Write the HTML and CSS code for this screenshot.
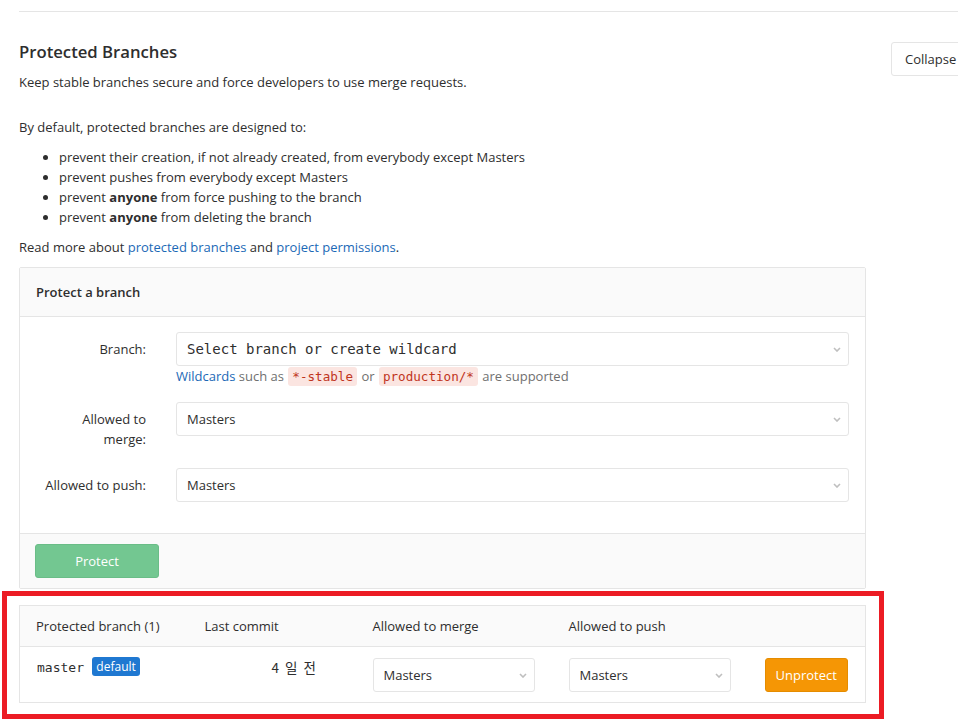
FILE: index.html
```html
<!DOCTYPE html>
<html lang="en">
<head>
    <meta charset="UTF-8">
    <meta name="viewport" content="width=device-width, initial-scale=1.0">
    <title>Protected Branches</title>
    <link rel="stylesheet" href="styles.css">
</head>
<body>
    <section class="settings">
        <div class="settings-header">
            <div class="settings-intro">
                <h4>Protected Branches</h4>
                <p>Keep stable branches secure and force developers to use merge requests.</p>
            </div>
            <button type="button" class="btn btn-collapse">Collapse</button>
        </div>

        <div class="settings-content">
            <p class="lead-in">By default, protected branches are designed to:</p>
            <ul class="rules">
                <li>prevent their creation, if not already created, from everybody except Masters</li>
                <li>prevent pushes from everybody except Masters</li>
                <li>prevent <strong>anyone</strong> from force pushing to the branch</li>
                <li>prevent <strong>anyone</strong> from deleting the branch</li>
            </ul>
            <p class="read-more">Read more about <a href="#">protected branches</a> and <a href="#">project permissions</a>.</p>

            <form class="panel">
                <div class="panel-heading">Protect a branch</div>
                <div class="panel-body">
                    <div class="form-group">
                        <label class="control-label">Branch:</label>
                        <div class="field">
                            <button type="button" class="dropdown-toggle mono">
                                <span>Select branch or create wildcard</span>
                                <svg class="chevron" width="8" height="5" viewBox="0 0 8 5"><path d="M1 1l3 3 3-3" fill="none" stroke="#bfbfbf" stroke-width="1.6"/></svg>
                            </button>
                            <p class="help-block"><a href="#">Wildcards</a> such as <code>*-stable</code> or <code>production/*</code> are supported</p>
                        </div>
                    </div>
                    <div class="form-group">
                        <label class="control-label">Allowed to<br>merge:</label>
                        <div class="field">
                            <button type="button" class="dropdown-toggle">
                                <span>Masters</span>
                                <svg class="chevron" width="8" height="5" viewBox="0 0 8 5"><path d="M1 1l3 3 3-3" fill="none" stroke="#bfbfbf" stroke-width="1.6"/></svg>
                            </button>
                        </div>
                    </div>
                    <div class="form-group">
                        <label class="control-label">Allowed to push:</label>
                        <div class="field">
                            <button type="button" class="dropdown-toggle">
                                <span>Masters</span>
                                <svg class="chevron" width="8" height="5" viewBox="0 0 8 5"><path d="M1 1l3 3 3-3" fill="none" stroke="#bfbfbf" stroke-width="1.6"/></svg>
                            </button>
                        </div>
                    </div>
                </div>
                <div class="panel-footer">
                    <button type="button" class="btn btn-protect" disabled>Protect</button>
                </div>
            </form>

            <div class="highlight">
                <table class="protected-table">
                    <colgroup>
                        <col style="width: 169px">
                        <col style="width: 167px">
                        <col style="width: 196px">
                        <col style="width: 196px">
                        <col>
                    </colgroup>
                    <thead>
                        <tr>
                            <th>Protected branch (1)</th>
                            <th>Last commit</th>
                            <th>Allowed to merge</th>
                            <th>Allowed to push</th>
                            <th></th>
                        </tr>
                    </thead>
                    <tbody>
                        <tr>
                            <td><span class="ref-name">master</span> <span class="badge">default</span></td>
                            <td><span class="time-ago">4 일 전</span></td>
                            <td>
                                <button type="button" class="dropdown-toggle">
                                    <span>Masters</span>
                                    <svg class="chevron" width="8" height="5" viewBox="0 0 8 5"><path d="M1 1l3 3 3-3" fill="none" stroke="#bfbfbf" stroke-width="1.6"/></svg>
                                </button>
                            </td>
                            <td>
                                <button type="button" class="dropdown-toggle">
                                    <span>Masters</span>
                                    <svg class="chevron" width="8" height="5" viewBox="0 0 8 5"><path d="M1 1l3 3 3-3" fill="none" stroke="#bfbfbf" stroke-width="1.6"/></svg>
                                </button>
                            </td>
                            <td><button type="button" class="btn btn-unprotect">Unprotect</button></td>
                        </tr>
                    </tbody>
                </table>
            </div>
        </div>
    </section>
</body>
</html>
```

FILE: styles.css
```css
html, body {
    overflow: hidden;
}

body {
    font-family: 'Open Sans', 'Noto Sans', sans-serif;
    font-size: 13px;
    line-height: 20px;
    color: #2e2e2e;
    background-color: #fff;
    margin: 0;
    padding: 0;
}

a {
    color: #1b69b6;
    text-decoration: none;
}

/* Settings section */
.settings {
    width: 1100px;
    margin: 11px 0 0 19px;
    border-top: 1px solid #e5e5e5;
}

.settings-header {
    display: flex;
    align-items: flex-start;
    padding-top: 28px;
}

.settings-intro {
    width: 847px;
}

.settings-intro h4 {
    margin: 0;
    font-size: 16.7px;
    line-height: 24px;
    font-weight: 600;
}

.settings-intro p {
    margin: 8px 0 0;
}

.btn {
    font-family: inherit;
    font-size: 13px;
    line-height: 20px;
    border-radius: 3px;
    padding: 6px 12px;
    cursor: pointer;
}

.btn-collapse {
    margin: 2px 0 0 25px;
    padding: 6px 12px 6px 13px;
    height: 34px;
    background: #fff;
    color: #2e2e2e;
    border: 1px solid #e5e5e5;
}

.lead-in {
    margin: 25px 0 0;
}

.rules {
    margin: 10px 0 0;
    padding-left: 40px;
}

.read-more {
    margin: 10px 0 0;
}

/* Protect form */
.panel {
    width: 845px;
    margin-top: 10px;
    border: 1px solid #e5e5e5;
    border-radius: 2px;
}

.panel-heading {
    background-color: #fafafa;
    border-bottom: 1px solid #e5e5e5;
    padding: 14px 16px;
    font-weight: 600;
}

.panel-body {
    padding: 15px 16px 16px 16px;
}

.form-group {
    display: grid;
    grid-template-columns: 110px 1fr;
    column-gap: 30px;
    margin-bottom: 15px;
}

.control-label {
    text-align: right;
    white-space: nowrap;
    padding-top: 7px;
    margin-bottom: 4px;
}

.dropdown-toggle {
    display: flex;
    align-items: center;
    justify-content: space-between;
    width: 100%;
    height: 34px;
    padding: 0 7px 0 10px;
    background: #fff;
    border: 1px solid #e5e5e5;
    border-radius: 3px;
    font-family: inherit;
    font-size: 13px;
    color: #2e2e2e;
    text-align: left;
}

.dropdown-toggle.mono {
    font-family: 'DejaVu Sans Mono', 'Liberation Mono', monospace;
    font-size: 14px;
}

.chevron {
    flex: none;
}

.help-block {
    margin: 0;
    color: #707070;
}

code {
    font-family: 'DejaVu Sans Mono', 'Liberation Mono', monospace;
    font-size: 12.6px;
    color: #c0341d;
    background-color: #fbe5e1;
    padding: 2px 4px;
    border-radius: 3px;
}

.help-block code {
    margin: 0 1px;
}

.panel-footer {
    background-color: #fafafa;
    border-top: 1px solid #e5e5e5;
    padding: 10px 15px;
}

.btn-protect {
    width: 124px;
    height: 34px;
    background-color: #73c791;
    border: 1px solid #6abd87;
    color: #fff;
    cursor: not-allowed;
}

/* Protected branches list */
.highlight {
    width: 847px;
    margin: 2px 0 0 -17px;
    border: 5px solid #ec1c24;
    padding: 9px 13px 11px 12px;
}

.protected-table {
    width: 847px;
    table-layout: fixed;
    border-collapse: collapse;
    border: 1px solid #e5e5e5;
}

.protected-table th {
    background-color: #fafafa;
    font-weight: normal;
    text-align: left;
    padding: 10px 16px;
    border-bottom: 1px solid #e5e5e5;
}

.protected-table td {
    padding: 11px 17px 10px;
    vertical-align: top;
}

.protected-table th:nth-child(n+3),
.protected-table td:nth-child(n+3) {
    padding-left: 17px;
}

.protected-table td:nth-child(-n+2) {
    padding-top: 10px;
}

.ref-name {
    font-family: 'DejaVu Sans Mono', 'Liberation Mono', monospace;
    font-size: 13px;
}

.badge {
    display: inline-block;
    margin-left: 5px;
    padding: 0 4px;
    height: 19px;
    line-height: 19px;
    font-size: 12px;
    color: #fff;
    background-color: #1f78d1;
    border-radius: 3px;
    vertical-align: 1px;
}

.time-ago {
    display: inline-block;
    padding-left: 66px;
    font-family: 'Noto Sans CJK KR', sans-serif;
    font-size: 13.5px;
    word-spacing: 3px;
}

.btn-unprotect {
    height: 34px;
    padding: 6px 10px;
    background-color: #f59605;
    border: 1px solid #e58c00;
    color: #fff;
}
```
